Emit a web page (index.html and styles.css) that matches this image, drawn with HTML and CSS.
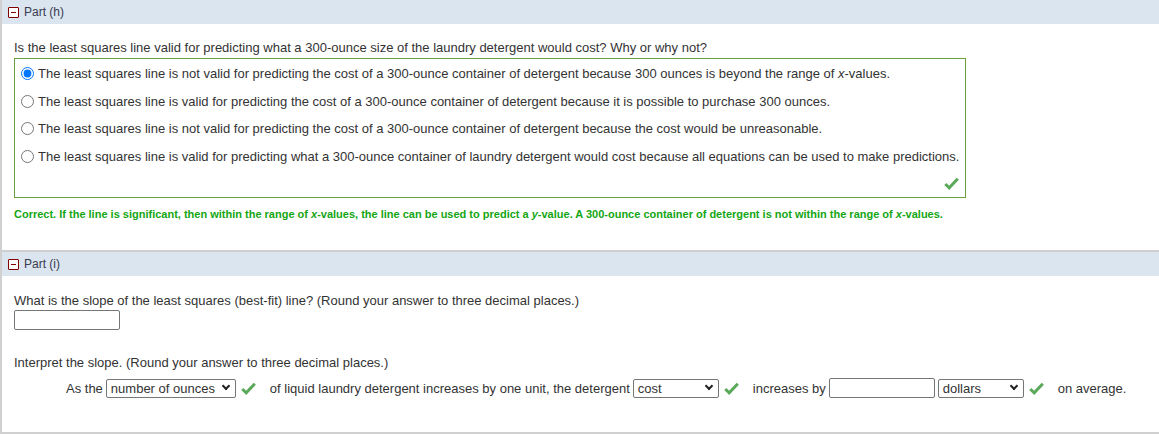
FILE: index.html
```html
<!DOCTYPE html>
<html lang="en">
<head>
    <meta charset="UTF-8">
    <title>Least Squares - Parts (h) and (i)</title>
    <link rel="stylesheet" href="styles.css">
</head>
<body>
    <div class="parts">
        <div class="part">
            <div class="part-head">
                <span class="toggle"></span>
                <span>Part (h)</span>
            </div>
            <div class="part-body">
                <p class="question">Is the least squares line valid for predicting what a 300-ounce size of the laundry detergent would cost? Why or why not?</p>
                <div class="choices correct">
                    <label class="choice"><input type="radio" name="h" checked><span>The least squares line is not valid for predicting the cost of a 300-ounce container of detergent because 300 ounces is beyond the range of <i>x</i>-values.</span></label>
                    <label class="choice"><input type="radio" name="h"><span>The least squares line is valid for predicting the cost of a 300-ounce container of detergent because it is possible to purchase 300 ounces.</span></label>
                    <label class="choice"><input type="radio" name="h"><span>The least squares line is not valid for predicting the cost of a 300-ounce container of detergent because the cost would be unreasonable.</span></label>
                    <label class="choice"><input type="radio" name="h"><span>The least squares line is valid for predicting what a 300-ounce container of laundry detergent would cost because all equations can be used to make predictions.</span></label>
                    <div class="mark-row">
                        <svg class="check" width="15" height="13" viewBox="0 0 15 13"><path d="M1.3 7 L5.2 10.8 L13.8 1.8" fill="none" stroke="#5aa95a" stroke-width="3"/></svg>
                    </div>
                </div>
                <p class="feedback">Correct. If the line is significant, then within the range of <i>x</i>-values, the line can be used to predict a <i>y</i>-value. A 300-ounce container of detergent is not within the range of <i>x</i>-values.</p>
            </div>
        </div>

        <div class="part">
            <div class="part-head">
                <span class="toggle"></span>
                <span>Part (i)</span>
            </div>
            <div class="part-body">
                <p class="question slope-q">What is the slope of the least squares (best-fit) line? (Round your answer to three decimal places.)</p>
                <input type="text" class="answer slope">
                <p class="question interpret">Interpret the slope. (Round your answer to three decimal places.)</p>
                <div class="sentence">
                    <span>As the</span>
                    <span class="pick wide">number of ounces</span>
                    <svg class="check" width="15" height="13" viewBox="0 0 15 13"><path d="M1.3 7 L5.2 10.8 L13.8 1.8" fill="none" stroke="#5aa95a" stroke-width="3"/></svg>
                    <span class="after-check">of liquid laundry detergent increases by one unit, the detergent</span>
                    <span class="pick">cost</span>
                    <svg class="check" width="15" height="13" viewBox="0 0 15 13"><path d="M1.3 7 L5.2 10.8 L13.8 1.8" fill="none" stroke="#5aa95a" stroke-width="3"/></svg>
                    <span class="after-check">increases by</span>
                    <input type="text" class="answer inline">
                    <span class="pick">dollars</span>
                    <svg class="check" width="15" height="13" viewBox="0 0 15 13"><path d="M1.3 7 L5.2 10.8 L13.8 1.8" fill="none" stroke="#5aa95a" stroke-width="3"/></svg>
                    <span class="after-check">on average.</span>
                </div>
            </div>
        </div>
    </div>
</body>
</html>
```

FILE: styles.css
```css
body {
    margin: 0;
    font-family: "Liberation Sans", Arial, sans-serif;
    font-size: 13px;
    color: #333;
    background-color: #fff;
}
.parts {
    border-left: 2px solid #d0d0d0;
    border-bottom: 2px solid #d0d0d0;
    height: 432px;
}
.part + .part {
    border-top: 2px solid #cfcfcf;
}
.part-head {
    display: flex;
    align-items: center;
    gap: 5px;
    height: 24px;
    padding-left: 6px;
    background-color: #dae5ef;
    font-size: 12px;
    color: #3a3a50;
}
.toggle {
    position: relative;
    width: 9px;
    height: 9px;
    border: 1px solid #800000;
    border-radius: 1px;
    background-color: #fff;
}
.toggle::after {
    content: "";
    position: absolute;
    left: 2px;
    top: 4px;
    width: 5px;
    height: 1px;
    background-color: #800000;
}
.part-body {
    padding: 0 12px;
}
.question {
    margin: 16px 0 3px;
    line-height: 15px;
}
.slope-q {
    margin: 17px 0 2px;
}
.choices {
    display: inline-block;
    border: 1px solid #6a9f3f;
    padding: 1px 6px 0 2px;
}
.choice {
    display: flex;
    align-items: center;
    height: 27.5px;
    white-space: nowrap;
}
.choice input {
    width: 13px;
    height: 13px;
    margin: 0 4px 0 4px;
}
.mark-row {
    display: flex;
    justify-content: flex-end;
    height: 27px;
    padding-top: 7px;
    box-sizing: border-box;
}
.feedback {
    margin: 10px 0 30px;
    font-size: 11px;
    font-weight: bold;
    color: #14a614;
}
.slope {
    display: block;
}
.answer {
    width: 106px;
    height: 20px;
    box-sizing: border-box;
    border: 1px solid #767676;
    border-radius: 2px;
    padding: 1px 4px;
    font-family: inherit;
    font-size: 13px;
}
.interpret {
    margin-top: 25px;
    margin-bottom: 8px;
}
.sentence {
    display: flex;
    align-items: center;
    padding-left: 52px;
    height: 20px;
}
.pick {
    position: relative;
    width: 86px;
    height: 19px;
    box-sizing: border-box;
    margin: 0 5px 0 3px;
    padding: 1px 4px;
    border: 1px solid #767676;
    border-radius: 2px;
    line-height: 15px;
}
.pick.wide {
    width: 130px;
}
.pick::after {
    content: "";
    position: absolute;
    right: 6px;
    top: 3px;
    width: 4px;
    height: 4px;
    border-right: 2px solid #222;
    border-bottom: 2px solid #222;
    transform: rotate(45deg);
}
.sentence .answer {
    margin-left: 3px;
}
.after-check {
    margin-left: 14px;
}
.check {
    flex: none;
}
```
